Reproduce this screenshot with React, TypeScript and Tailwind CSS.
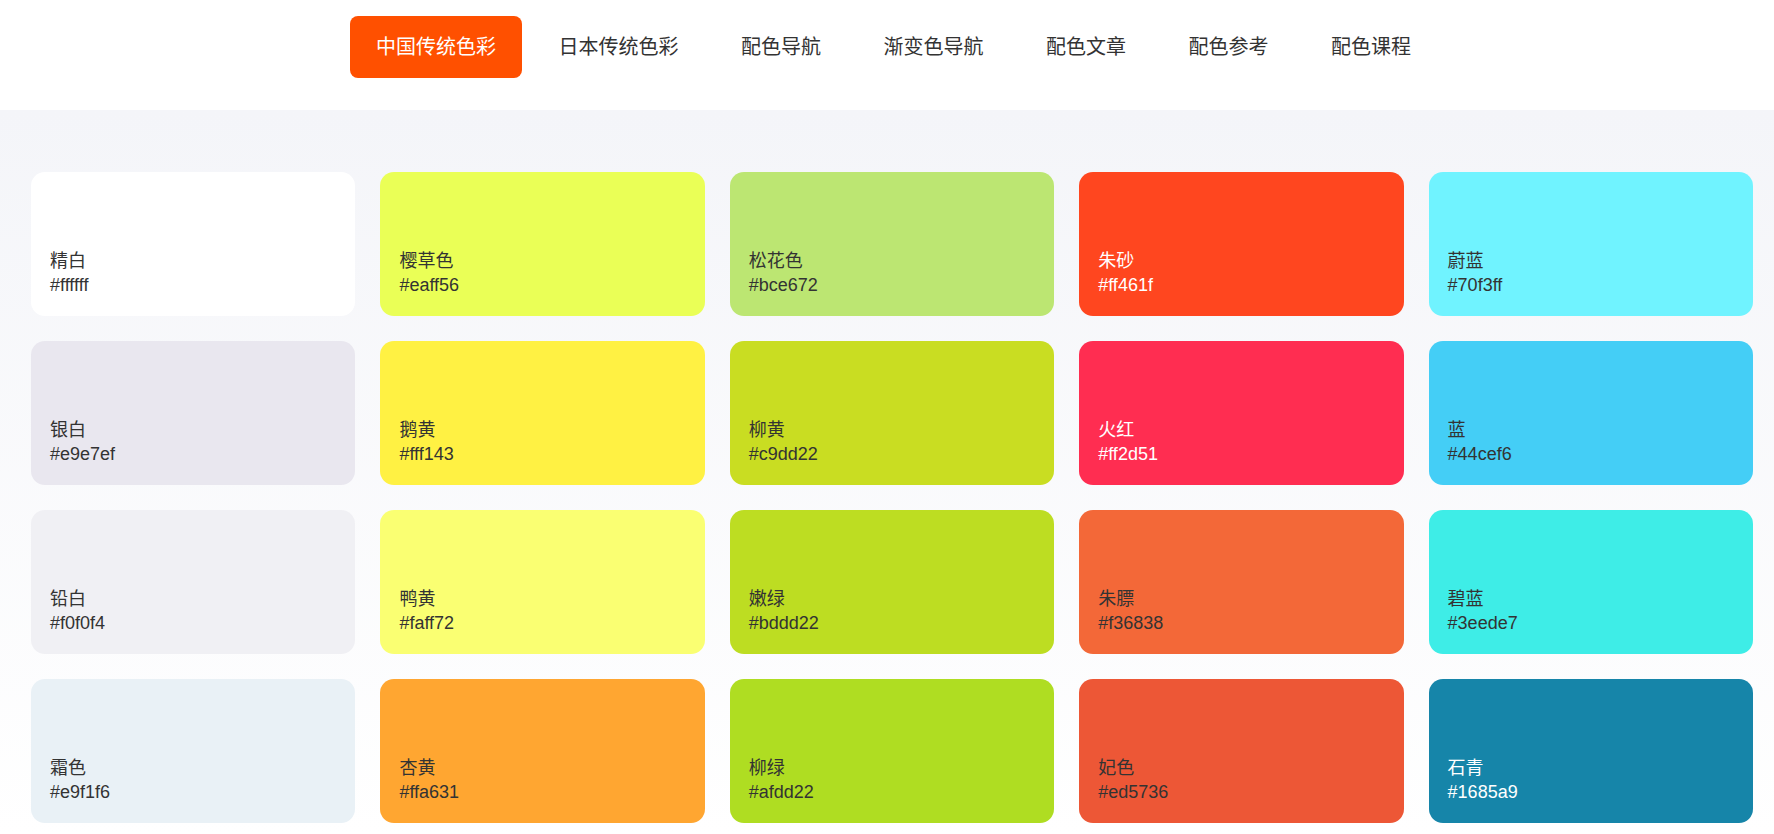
import { useState } from 'react';

const tabs = ['中国传统色彩', '日本传统色彩', '配色导航', '渐变色导航', '配色文章', '配色参考', '配色课程'];

type Swatch = { name: string; hex: string; light?: boolean };

// row by row, as shown on the page
const colors: Swatch[] = [
  { name: '精白', hex: '#ffffff' },
  { name: '樱草色', hex: '#eaff56' },
  { name: '松花色', hex: '#bce672' },
  { name: '朱砂', hex: '#ff461f', light: true },
  { name: '蔚蓝', hex: '#70f3ff' },
  { name: '银白', hex: '#e9e7ef' },
  { name: '鹅黄', hex: '#fff143' },
  { name: '柳黄', hex: '#c9dd22' },
  { name: '火红', hex: '#ff2d51', light: true },
  { name: '蓝', hex: '#44cef6' },
  { name: '铅白', hex: '#f0f0f4' },
  { name: '鸭黄', hex: '#faff72' },
  { name: '嫩绿', hex: '#bddd22' },
  { name: '朱膘', hex: '#f36838' },
  { name: '碧蓝', hex: '#3eede7' },
  { name: '霜色', hex: '#e9f1f6' },
  { name: '杏黄', hex: '#ffa631' },
  { name: '柳绿', hex: '#afdd22' },
  { name: '妃色', hex: '#ed5736' },
  { name: '石青', hex: '#1685a9', light: true },
];

function ColorCard({ c }: { c: Swatch }) {
  return (
    <div
      className={`h-[144px] rounded-[14px] flex flex-col justify-end px-[19px] pb-[19px] text-[18px] leading-[24px] ${c.light ? 'text-white' : 'text-[#333333]'}`}
      style={{ backgroundColor: c.hex }}
    >
      <div>{c.name}</div>
      <div>{c.hex}</div>
    </div>
  );
}

export default function App() {
  const [active, setActive] = useState(0);

  return (
    <div className="min-h-[834px] bg-white font-['Liberation_Sans','Noto_Sans_CJK_SC',sans-serif]">
      {/* Top nav */}
      <header className="h-[110px] bg-white flex items-start pt-[16px] pl-[350px]">
        <nav className="flex gap-[10.5px]">
          {tabs.map((t, i) => (
            <button
              key={t}
              onClick={() => setActive(i)}
              className={`h-[62px] px-[26px] rounded-[8px] text-[20px] ${i === active ? 'bg-[#ff5000] text-white' : 'text-[#333333]'}`}
            >
              {t}
            </button>
          ))}
        </nav>
      </header>

      {/* Colour grid */}
      <main className="bg-gradient-to-b from-[#f4f5f9] to-white pt-[62px] pl-[31px] pr-[21px] pb-[12px]">
        <div className="grid grid-cols-5 gap-[25px]">
          {colors.map(c => (
            <ColorCard key={c.name} c={c} />
          ))}
        </div>
      </main>
    </div>
  );
}
